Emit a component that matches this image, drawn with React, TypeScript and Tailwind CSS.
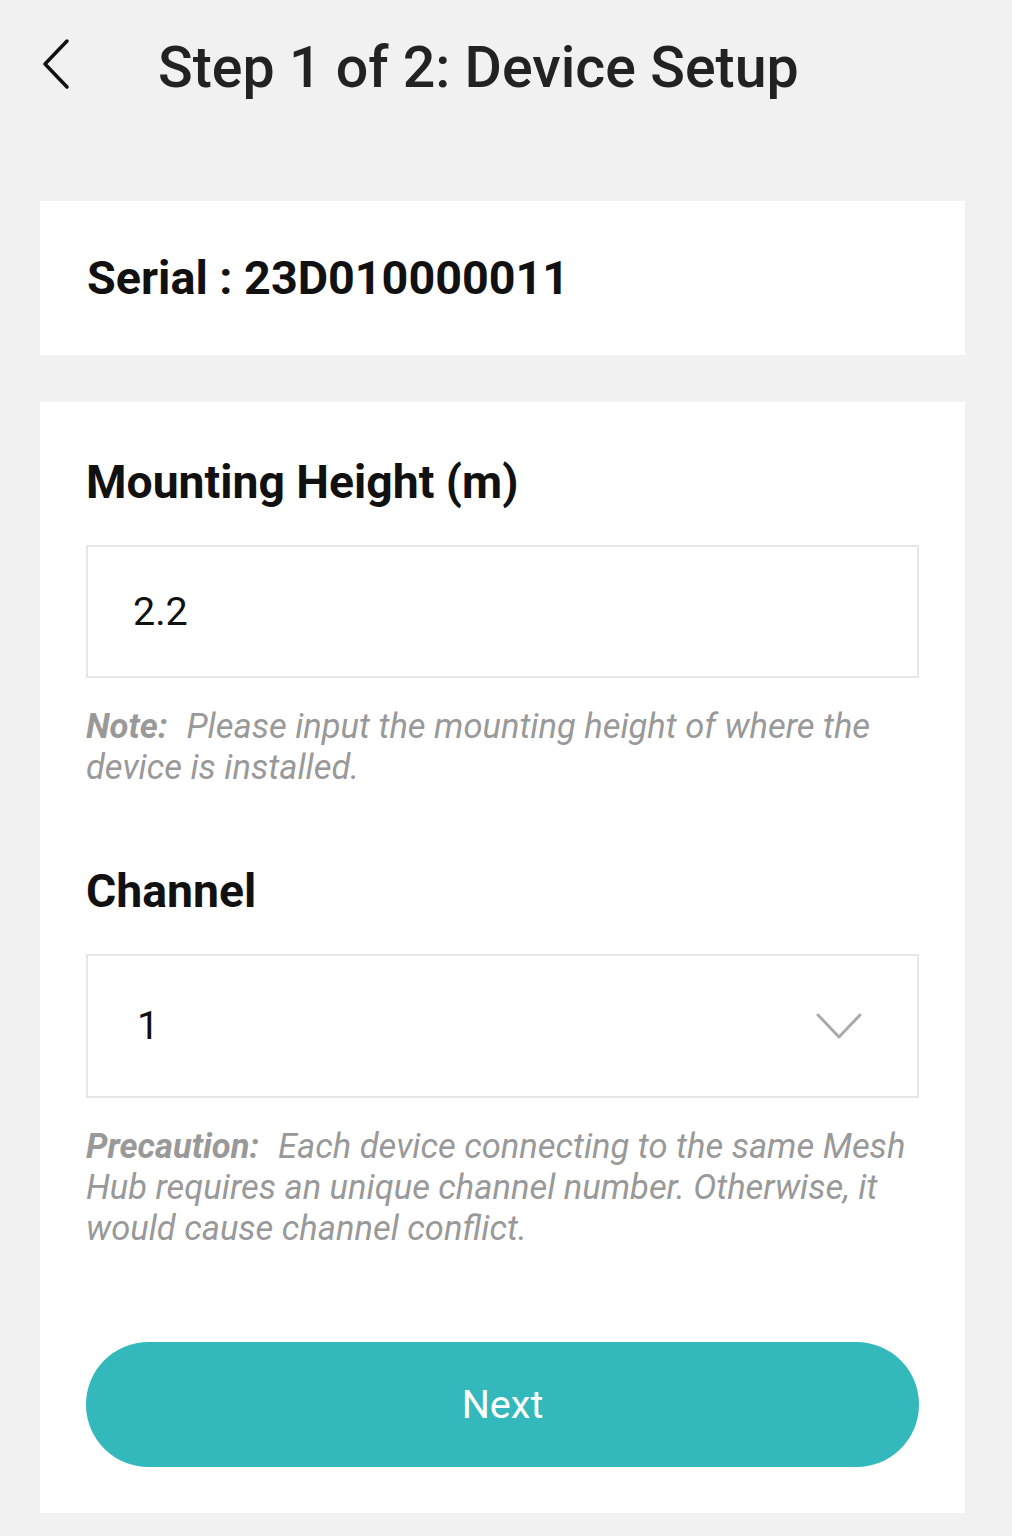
const ROBOTO = { fontFamily: 'Roboto, "Noto Sans", sans-serif' };

function ChevronLeft() {
  return (
    <svg width="30" height="52" viewBox="0 0 30 52" fill="none">
      <path d="M26 3 L4 26 L26 49" stroke="#111" strokeWidth="3.5" strokeLinecap="round" strokeLinejoin="round" />
    </svg>
  );
}

function ChevronDown() {
  return (
    <svg width="46" height="28" viewBox="0 0 46 28" fill="none">
      <path d="M2 3 L23 25 L44 3" stroke="#aaaaaa" strokeWidth="3" strokeLinecap="round" strokeLinejoin="round" />
    </svg>
  );
}

export default function App() {
  return (
    <div className="min-h-[1536px] w-[1012px] bg-[#f1f1f1] text-[#111]" style={ROBOTO}>
      {/* header */}
      <div className="flex h-[134px] items-start pt-[38px]">
        <div className="ml-[41px] w-[117px]">
          <ChevronLeft />
        </div>
        <h1 className="text-[57.3px] leading-[60px] font-medium text-[#222]">Step 1 of 2: Device Setup</h1>
      </div>

      <div className="mr-[47px] ml-[40px] mt-[67px] flex h-[154px] items-center bg-white px-[47px]">
        <p className="text-[46.7px] font-bold">Serial : 23D010000011</p>
      </div>

      <div className="mr-[47px] ml-[40px] mt-[47px] bg-white px-[46px] pt-[50px] pb-[46px]">
        <p className="text-[46.3px] leading-[60px] font-bold">Mounting Height (m)</p>

        <div className="mt-[33px] flex h-[133px] items-center border-2 border-[#e6e6e6] px-[45px]">
          <span className="text-[39.5px]">2.2</span>
        </div>

        <p className="mt-[28px] text-[34.5px] leading-[41px] text-[#999] italic">
          <span className="mr-[19px] inline-block font-bold">Note:</span>Please input the mounting height of where the device is installed.
        </p>

        <p className="mt-[73px] text-[46.3px] leading-[60px] font-bold">Channel</p>

        <div className="mt-[33px] flex h-[144px] items-center justify-between border-2 border-[#e6e6e6] pr-[55px] pl-[49px]">
          <span className="text-[39.5px]">1</span>
          <ChevronDown />
        </div>

        <p className="mt-[28px] text-[34.5px] leading-[41px] text-[#999] italic">
          <span className="mr-[19px] inline-block font-bold">Precaution:</span>Each device connecting to the same Mesh Hub requires an unique channel number. Otherwise, it would cause channel conflict.
        </p>

        <button
          type="button"
          className="mt-[93px] flex h-[125px] w-full items-center justify-center rounded-full bg-[#33b8bb] text-[39.5px] text-white"
        >
          Next
        </button>
      </div>
    </div>
  );
}
